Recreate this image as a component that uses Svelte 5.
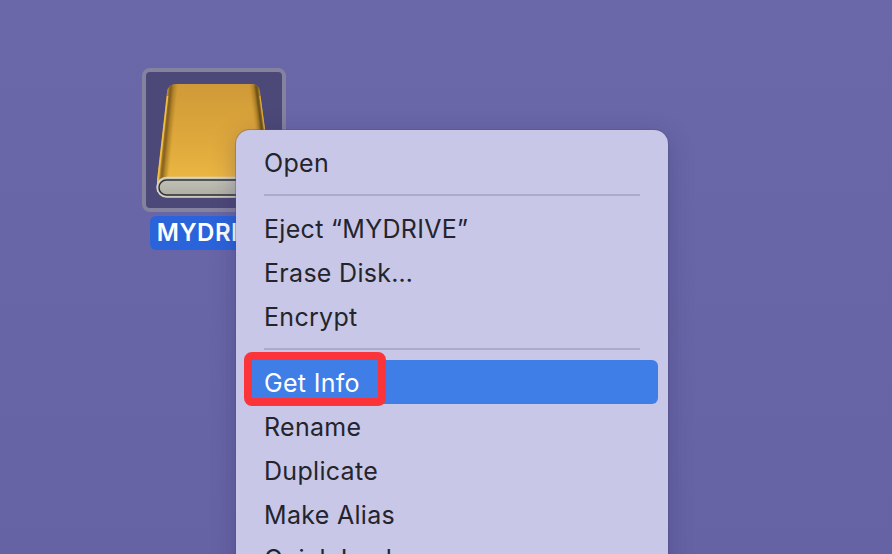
<script>
  const groups = [
    ['Open'],
    ['Eject “MYDRIVE”', 'Erase Disk…', 'Encrypt'],
    ['Get Info', 'Rename', 'Duplicate', 'Make Alias', 'Quick Look']
  ];
</script>

<div class="desktop">
  <div class="volume">
    <div class="tile">
      <svg width="136" height="136" viewBox="0 0 136 136">
        <defs>
          <linearGradient id="gold" x1="0" y1="0" x2="0" y2="1">
            <stop offset="0" stop-color="#cf9a38" />
            <stop offset="0.55" stop-color="#e0a93c" />
            <stop offset="1" stop-color="#eebb45" />
          </linearGradient>
          <linearGradient id="foot" x1="0" y1="0" x2="0" y2="1">
            <stop offset="0" stop-color="#c3c2b6" />
            <stop offset="1" stop-color="#aeada3" />
          </linearGradient>
          <clipPath id="case">
            <path d="M13 12 Q14 4 23 4 H97 Q105 4 106 12 L118 100 V112 H3 V100 Z" />
          </clipPath>
          <filter id="soft" x="-20%" y="-5%" width="140%" height="110%">
            <feGaussianBlur stdDeviation="0.9" />
          </filter>
        </defs>
        <path d="M13 12 Q14 4 23 4 H97 Q105 4 106 12 L118 100 V112 H3 V100 Z" fill="url(#gold)" />
        <!-- shaded side bands follow the slant of the case -->
        <g clip-path="url(#case)">
          <g fill="none" filter="url(#soft)">
            <path d="M20.5 4 L10.5 104" stroke="#a87a22" stroke-width="3.5" opacity="0.65" />
            <path d="M17 4 L7 104" stroke="#6b4d14" stroke-width="3.5" opacity="0.85" />
            <path d="M98.5 4 L112 104" stroke="#a87a22" stroke-width="3.5" opacity="0.65" />
            <path d="M102 4 L115 104" stroke="#55400f" stroke-width="3.5" opacity="0.9" />
          </g>
          <g fill="none">
            <path d="M13.5 16 L3.5 104" stroke="#f0c04a" stroke-width="1.6" />
            <path d="M106 16 L118 104" stroke="#d8a93f" stroke-width="1.4" />
          </g>
        </g>
        <rect x="3" y="97.5" width="117" height="19.5" rx="9.7" fill="url(#foot)" stroke="#d6d5c6" stroke-width="1.5" />
        <rect x="5" y="100" width="113" height="15" rx="7.5" fill="none" stroke="#2f2f36" stroke-width="1.4" />
      </svg>
    </div>
    <div class="label">MYDRIVE</div>
  </div>

  <div class="menu">
    {#each groups as group, i}
      {#if i > 0}
        <div class="sep" class:lower={i === 2}></div>
      {/if}
      {#each group as item}
        <div class="item" class:active={item === 'Get Info'}>{item}</div>
      {/each}
    {/each}
  </div>

  <div class="callout"></div>
</div>

<style>
  :global(body) {
    margin: 0;
  }

  .desktop {
    position: relative;
    width: 892px;
    height: 554px;
    overflow: hidden;
    background: linear-gradient(180deg, #6b68a9 0%, #6663a5 100%);
    font-family: Inter, "Liberation Sans", sans-serif;
  }

  .volume {
    position: absolute;
    left: 142px;
    top: 68px;
    width: 144px;
    display: flex;
    flex-direction: column;
    align-items: center;
    gap: 4px;
  }

  .tile {
    box-sizing: border-box;
    width: 144px;
    height: 144px;
    border: 4px solid #84829f;
    border-radius: 8px;
    background: #4c4878;
    display: flex;
    align-items: flex-start;
    justify-content: flex-start;
    padding: 8px 0 0 8px;
  }

  .tile svg {
    flex: none;
  }

  .label {
    height: 34px;
    line-height: 34px;
    padding: 0 7px;
    border-radius: 6px;
    background: #2b63db;
    color: #fff;
    font-size: 24px;
    font-weight: 600;
    letter-spacing: 0.5px;
    white-space: nowrap;
  }

  .menu {
    position: absolute;
    left: 236px;
    top: 130px;
    width: 432px;
    height: 470px;
    box-sizing: border-box;
    padding: 11px 10px 0;
    border-radius: 14px;
    background: #c8c7e8;
    box-shadow: 0 0 0 1px rgba(80, 76, 130, 0.35), 0 6px 24px rgba(40, 36, 90, 0.3);
    color: #24242c;
    font-size: 25px;
    letter-spacing: 0.3px;
  }

  .item {
    height: 44px;
    line-height: 45px;
    padding-left: 18px;
    border-radius: 6px;
    white-space: nowrap;
  }

  .item.active {
    background: #3f7ee6;
    color: #fff;
  }

  .sep {
    height: 2px;
    margin: 9px 18px 11px;
    background: #acabca;
  }

  .sep.lower {
    margin-bottom: 10px;
  }

  .sep.lower ~ .item {
    line-height: 46px;
  }

  .callout {
    position: absolute;
    left: 244px;
    top: 352px;
    width: 142px;
    height: 54px;
    box-sizing: border-box;
    border: 8px solid #fb3439;
    border-radius: 8px;
  }
</style>
